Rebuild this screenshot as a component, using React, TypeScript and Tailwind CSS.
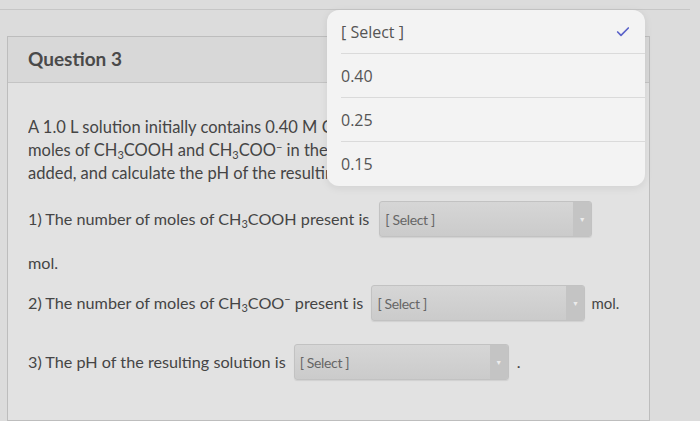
import { Check } from "lucide-react";

const font = { fontFamily: "Lato, 'Open Sans', sans-serif" };

function SelectBox({ width }: { width: number }) {
  return (
    <div
      className="flex h-[36px] items-stretch overflow-hidden rounded-[3px] border border-[#c2c2c2] bg-gradient-to-b from-[#d6d6d6] to-[#cbcbcb] shadow-[0_1px_1px_rgba(0,0,0,0.08)]"
      style={{ width }}
    >
      <div className="flex flex-1 items-center pl-[5px] text-[14px] tracking-tight text-[#666]">
        [ Select ]
      </div>
      <div className="flex w-[18px] items-center justify-center bg-[#c4c4c4]">
        <span className="text-[7px] text-[#ececec]">▼</span>
      </div>
    </div>
  );
}

export default function App() {
  const options = ["0.40", "0.25", "0.15"];

  return (
    <div className="relative h-[421px] w-[700px] overflow-hidden bg-[#dcdcdc] text-[#454545]" style={font}>
      <div className="h-[9px]" />
      <div className="h-px w-[690px] bg-[#c6c6c6]" />

      <div className="ml-[7px] mt-[26px] w-[643px] border border-[#bdbdbd] bg-[#e2e2e2]">
        <div className="flex h-[46px] items-center border-b border-[#c4c4c4] bg-[#d8d8d8] pl-[20px]">
          <h2 className="text-[19px] font-bold text-[#4a4a4a]">Question 3</h2>
        </div>

        <div className="px-[20px] pt-[33px] pb-[40px] text-[16.2px]">
          <div className="w-[299px] overflow-hidden whitespace-nowrap text-[16.5px] leading-[23px]">
            <div>A 1.0 L solution initially contains 0.40 M C</div>
            <div>
              moles of CH<sub className="text-[11px]">3</sub>COOH and CH<sub className="text-[11px]">3</sub>COO
              <sup className="text-[11px]">−</sup> in the
            </div>
            <div>added, and calculate the pH of the resulting</div>
          </div>

          <div className="mt-[16px] flex h-[36px] items-center gap-[10px]">
            <span>
              1) The number of moles of CH<sub className="text-[11px]">3</sub>COOH present is
            </span>
            <SelectBox width={213} />
          </div>

          <div className="mt-[14px] leading-[23px]">mol.</div>

          <div className="mt-[11px] flex h-[36px] items-center gap-[8px]">
            <span>
              2) The number of moles of CH<sub className="text-[11px]">3</sub>COO
              <sup className="text-[11px]">−</sup> present is
            </span>
            <SelectBox width={214} />
            <span className="-ml-[2px] text-[15px]">mol.</span>
          </div>

          <div className="mt-[23px] flex h-[36px] items-center gap-[8px]">
            <span>3) The pH of the resulting solution is</span>
            <SelectBox width={215} />
            <span>.</span>
          </div>
        </div>
      </div>

      <div
        className="absolute left-[327px] top-[10px] w-[318px] overflow-hidden rounded-[12px] bg-[#f3f3f3] pl-[14px] text-[16px] text-[#555] shadow-[0_2px_8px_rgba(0,0,0,0.08)]"
        style={{ fontFamily: "'Open Sans', Roboto, sans-serif" }}
      >
        <div className="flex h-[44px] items-center justify-between border-b border-[#dadada] pr-[14px]">
          <span>[ Select ]</span>
          <Check className="h-[16px] w-[16px] text-[#5b63c9]" strokeWidth={2.5} />
        </div>
        {options.map((o, i) => (
          <div
            key={o}
            className={`flex h-[44px] items-center ${i < options.length - 1 ? "border-b border-[#dadada]" : ""}`}
          >
            {o}
          </div>
        ))}
      </div>
    </div>
  );
}
